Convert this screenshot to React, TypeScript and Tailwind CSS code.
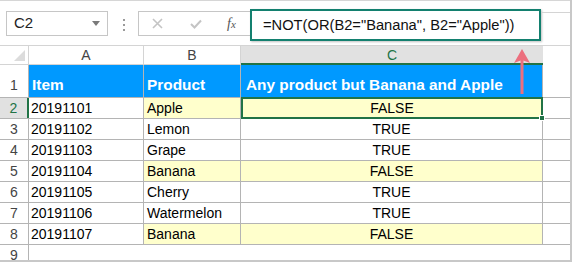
import React from "react";

type Row = {
  n: number;
  item: string;
  product: string;
  result: string;
  hit: boolean; // product is Banana or Apple
};

const rows: Row[] = [
  { n: 2, item: "20191101", product: "Apple", result: "FALSE", hit: true },
  { n: 3, item: "20191102", product: "Lemon", result: "TRUE", hit: false },
  { n: 4, item: "20191103", product: "Grape", result: "TRUE", hit: false },
  { n: 5, item: "20191104", product: "Banana", result: "FALSE", hit: true },
  { n: 6, item: "20191105", product: "Cherry", result: "TRUE", hit: false },
  { n: 7, item: "20191106", product: "Watermelon", result: "TRUE", hit: false },
  { n: 8, item: "20191107", product: "Banana", result: "FALSE", hit: true },
];

const font = { fontFamily: '"Liberation Sans", Arial, sans-serif' };

const Toolbar: React.FC = () => (
  <div className="flex h-[46px] items-start border-t border-[#d6d6d6] border-b border-b-[#d4d4d4]">
    {/* Name box */}
    <div className="ml-[6px] mt-[10px] flex h-[25px] w-[102px] items-center justify-between border border-[#c6c6c6] pl-[7px] pr-[7px]">
      <span className="text-[15px] text-[#222]">C2</span>
      <svg width="8" height="5" viewBox="0 0 8 5">
        <path d="M0 0 L8 0 L4 5 Z" fill="#7a7a7a" />
      </svg>
    </div>

    {/* Drag dots */}
    <div className="ml-[15px] mt-[18px] flex flex-col gap-[3px]">
      <span className="h-[2px] w-[2px] bg-[#9a9a9a]" />
      <span className="h-[2px] w-[2px] bg-[#9a9a9a]" />
      <span className="h-[2px] w-[2px] bg-[#9a9a9a]" />
    </div>

    {/* Cancel / Enter / fx */}
    <div className="ml-[13px] mt-[10px] flex h-[25px] w-[112px] items-center border border-r-0 border-[#c6c6c6]">
      <svg className="ml-[13px]" width="11" height="11" viewBox="0 0 11 11">
        <path d="M1 1 L10 10 M10 1 L1 10" stroke="#c4c4c4" strokeWidth="1.6" />
      </svg>
      <svg className="ml-[27px]" width="12" height="10" viewBox="0 0 12 10">
        <path d="M1 5 L4.5 8.5 L11 1.5" stroke="#c4c4c4" strokeWidth="2" fill="none" />
      </svg>
      <span
        className="ml-[25px] text-[14px] italic text-[#555]"
        style={{ fontFamily: '"Liberation Serif", "Times New Roman", serif' }}
      >
        f<span className="text-[11px]">x</span>
      </span>
    </div>

    {/* Formula bar */}
    <div className="mt-[8px] flex h-[32px] w-[291px] items-center border-2 border-[#13806f] bg-white pl-[11px] shadow-[1px_1px_2px_rgba(0,0,0,0.25)]">
      <span className="text-[14.7px] text-[#111]">=NOT(OR(B2="Banana", B2="Apple"))</span>
    </div>

    <div className="mt-[11px] flex-1 border-t border-[#d4d4d4]" />
  </div>
);

const ColHeaders: React.FC = () => (
  <div className="flex h-[19px]">
    <div className="relative w-[29px] border-r border-b border-[#d4d4d4]">
      <svg className="absolute bottom-[3px] right-[3px]" width="11" height="11" viewBox="0 0 11 11">
        <path d="M11 0 L11 11 L0 11 Z" fill="#dcdcdc" />
      </svg>
    </div>
    <div className="flex w-[115px] items-end justify-center border-r border-b border-[#d4d4d4] text-[14px] leading-[17px] text-[#444]">
      A
    </div>
    <div className="flex w-[97px] items-end justify-center border-r border-b border-[#d4d4d4] text-[14px] leading-[17px] text-[#444]">
      B
    </div>
    <div className="flex w-[302px] items-end justify-center border-b-2 border-[#217346] bg-[#e1e1e1] text-[14px] leading-[16px] text-[#217346]">
      C
    </div>
    <div className="flex-1" />
  </div>
);

const App: React.FC = () => {
  return (
    <div className="h-[264px] w-[573px] bg-white" style={font}>
      <div className="relative h-[262px] w-[572px] overflow-hidden border-r-2 border-b-2 border-[#c8c8c8] bg-white">
        <Toolbar />
        <ColHeaders />

        {/* Header row 1 */}
        <div className="flex h-[33px] border-b border-[#b4b4b4]">
          <div className="flex w-[29px] items-end justify-center border-r border-[#b4b4b4] pb-[1px] text-[14px] text-[#444]">
            1
          </div>
          <div className="flex w-[115px] items-end border-r border-[#b4b4b4] bg-[#0099ff] pb-[1px] pl-[3px] text-[15.4px] font-bold text-white">
            Item
          </div>
          <div className="flex w-[97px] items-end border-r border-[#b4b4b4] bg-[#0099ff] pb-[1px] pl-[3px] text-[15.4px] font-bold text-white">
            Product
          </div>
          <div className="flex w-[302px] items-end border-r border-[#b4b4b4] bg-[#0099ff] pb-[1px] pl-[5px] text-[15.4px] font-bold text-white">
            Any product but Banana and Apple
          </div>
          <div className="flex-1" />
        </div>

        {/* Data rows */}
        {rows.map((r) => {
          const selected = r.n === 2;
          return (
            <div key={r.n} className="flex h-[21px] border-b border-[#b4b4b4] text-[14px] leading-[20px]">
              <div
                className={
                  selected
                    ? "w-[29px] border-r-2 border-[#217346] bg-[#e1e1e1] text-center text-[#217346]"
                    : "w-[29px] border-r border-[#b4b4b4] text-center text-[#444]"
                }
              >
                {r.n}
              </div>
              <div className="w-[115px] border-r border-[#b4b4b4] pl-[2px] text-black">{r.item}</div>
              <div
                className={
                  r.hit
                    ? "w-[97px] border-r border-[#b4b4b4] bg-[#ffffcc] pl-[3px] text-black"
                    : "w-[97px] border-r border-[#b4b4b4] pl-[3px] text-black"
                }
              >
                {r.product}
              </div>
              <div
                className={
                  selected
                    ? "relative -mt-px h-[22px] w-[302px] border-2 border-[#217346] bg-[#ffffcc] text-center leading-[19px] text-black"
                    : r.hit
                    ? "w-[302px] border-r border-[#b4b4b4] bg-[#ffffcc] text-center text-black"
                    : "w-[302px] border-r border-[#b4b4b4] text-center text-black"
                }
              >
                {r.result}
                {selected && (
                  <span className="absolute -bottom-[4px] -right-[4px] h-[6px] w-[6px] border border-white bg-[#217346]" />
                )}
              </div>
              <div className="flex-1" />
            </div>
          );
        })}

        {/* Row 9 */}
        <div className="flex h-[20px] text-[14px] leading-[20px]">
          <div className="w-[29px] border-r border-[#b4b4b4] text-center text-[#444]">9</div>
          <div className="flex-1" />
        </div>

        {/* Red arrow pointing at the formula bar */}
        <svg className="absolute left-[513px] top-[48px]" width="18" height="48" viewBox="0 0 18 48">
          <path d="M9 10 L9 46" stroke="#ec6f7e" strokeWidth="3" />
          <path d="M9 1 L17 15 L9 12 L1 15 Z" fill="#ec6f7e" />
        </svg>
      </div>
    </div>
  );
};

export default App;
